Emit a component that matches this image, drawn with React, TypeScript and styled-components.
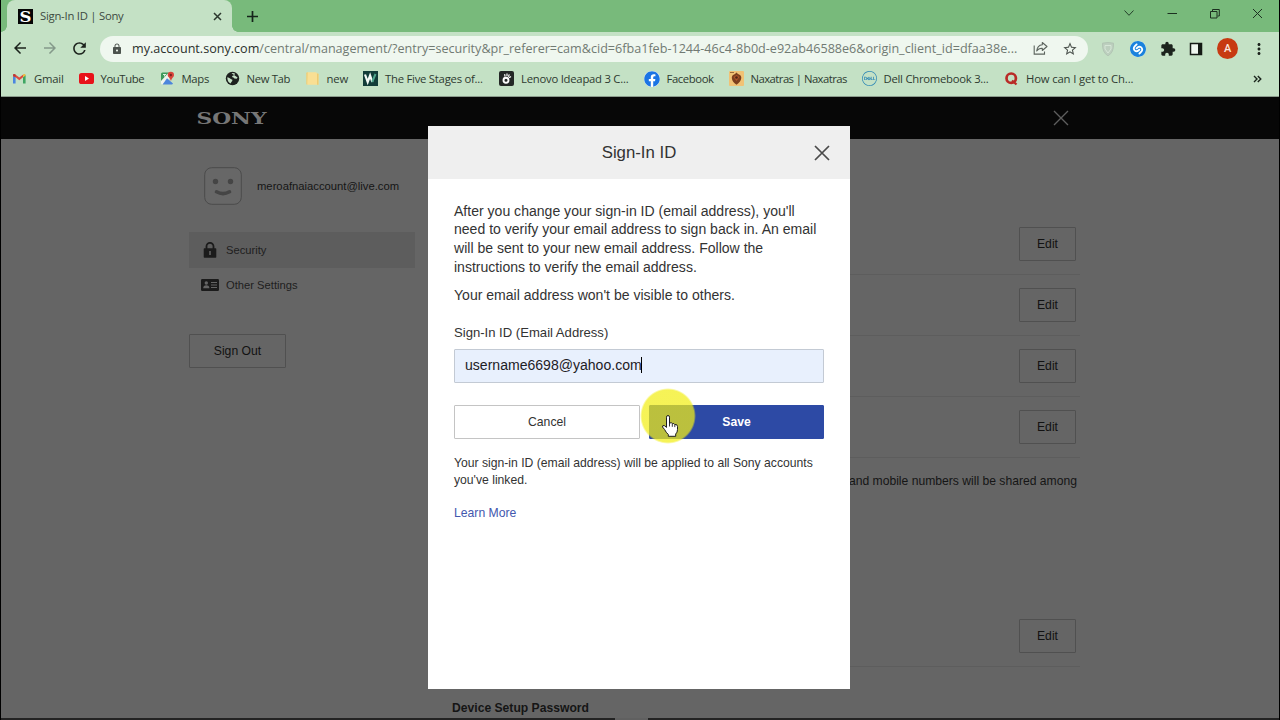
import React from "react";
import styled, { createGlobalStyle } from "styled-components";
import {
  MdArrowBack,
  MdArrowForward,
  MdRefresh,
  MdLock,
  MdStarBorder,
  MdExtension,
  MdMoreVert,
} from "react-icons/md";
import { SiShazam, SiDell } from "react-icons/si";
import { FaFacebook } from "react-icons/fa";

const GlobalStyle = createGlobalStyle`
  * { box-sizing: border-box; }
  body { margin: 0; background: #000; }
  button, input { font: inherit; margin: 0; }
`;

const uiFont = `"Open Sans", "Noto Sans", sans-serif`;
const pageFont = `"Liberation Sans", Arial, sans-serif`;

const Screen = styled.div`
  position: relative;
  width: 1280px;
  height: 720px;
  overflow: hidden;
  display: flex;
  flex-direction: column;
  padding: 0 1px;
  background: #000;
`;

/* ---------- browser chrome ---------- */

const TabStrip = styled.div`
  height: 32px;
  flex: none;
  display: flex;
  align-items: center;
  background: #78ba7b;
`;

const Tab = styled.div`
  position: relative;
  width: 225px;
  height: 32px;
  margin-left: 5.5px;
  padding: 0 10px 0 11px;
  display: flex;
  align-items: center;
  border-radius: 8px 8px 0 0;
  background: #c4e1c5;
  &::before,
  &::after {
    content: "";
    position: absolute;
    bottom: 0;
    width: 6px;
    height: 6px;
  }
  &::before {
    left: -6px;
    background: radial-gradient(circle at 0 0, transparent 5.5px, #c4e1c5 6px);
  }
  &::after {
    right: -6px;
    background: radial-gradient(circle at 100% 0, transparent 5.5px, #c4e1c5 6px);
  }
`;

const Favicon = styled.span`
  width: 15px;
  height: 15px;
  background: #050505;
  display: flex;
`;

const TabTitle = styled.span`
  flex: 1;
  margin-left: 7.5px;
  font: 11.3px/16px ${uiFont};
  letter-spacing: -0.25px;
  color: #3c4a3f;
  white-space: nowrap;
`;

const NewTab = styled.span`
  display: flex;
  margin-left: 14px;
`;

const WindowControls = styled.div`
  margin-left: auto;
  display: flex;
  align-items: center;
  height: 26px;
  align-self: flex-start;
  gap: 31px;
  padding-right: 16.5px;
  svg { display: block; }
`;

const Toolbar = styled.div`
  height: 33px;
  flex: none;
  display: flex;
  align-items: center;
  padding-left: 10px;
  background: #c4e1c5;
  color: #1c231d;
`;

const NavButtons = styled.div`
  display: flex;
  width: 89px;
  gap: 11.5px;
  svg { display: block; }
  svg:nth-child(2) { color: #84998a; }
`;

const Omnibox = styled.div`
  width: 988px;
  height: 26px;
  border-radius: 13px;
  background: #eff7ef;
  display: flex;
  align-items: center;
  padding: 0 9px 0 11px;
  color: #4c534e;
`;

const Url = styled.span`
  width: 901px;
  margin-left: 9px;
  font: 12.6px/20px ${uiFont};
  letter-spacing: 0;
  color: #717a73;
  white-space: nowrap;
  b { font-weight: 400; color: #2b302c; }
`;

const OmniActions = styled.div`
  display: flex;
  align-items: center;
  gap: 14px;
`;

const Extensions = styled.div`
  display: flex;
  align-items: center;
  flex: 1;
  padding: 0 11px 0 12px;
  justify-content: space-between;
  svg { display: block; }
`;

const Avatar = styled.span`
  width: 21px;
  height: 21px;
  margin: 0 -2px 0 0;
  border-radius: 50%;
  background: #c73a12;
  color: #fbe6df;
  font: 11px/21px Roboto, sans-serif;
  font-weight: 500;
  text-align: center;
`;

const Disc = styled.span`
  width: 16px;
  height: 16px;
  border-radius: 50%;
  background: #fff;
  display: flex;
  color: #1a82dd;
`;

const BookmarkBar = styled.div`
  height: 32px;
  flex: none;
  display: flex;
  align-items: center;
  padding: 0 0 4px 11px;
  background: #c4e1c5;
  border-bottom: 1px solid #8b9b8c;
`;

const BookmarkItem = styled.div<{ $width: number }>`
  width: ${(p) => p.$width}px;
  display: flex;
  align-items: center;
  gap: 7px;
  svg { flex: none; display: block; }
`;

const BookmarkLabel = styled.span<{ $spacing: number }>`
  font: 11.3px/16px ${uiFont};
  letter-spacing: ${(p) => p.$spacing}px;
  color: #2e3a30;
  white-space: nowrap;
`;

const More = styled.span`
  display: flex;
  margin-left: auto;
  padding-right: 17px;
`;

/* ---------- account page ---------- */

const SiteHeader = styled.header`
  height: 42px;
  flex: none;
  display: flex;
  align-items: center;
  justify-content: space-between;
  padding: 0 210px 0 192px;
  background: #070707;
`;

const SiteBody = styled.main`
  flex: 1;
  min-height: 0;
  display: flex;
  background: #656565;
  padding-left: 188px;
  font-family: ${pageFont};
  color: #151515;
`;

const Sidebar = styled.aside`
  width: 226px;
  display: flex;
  flex-direction: column;
  align-items: flex-start;
`;

const Account = styled.div`
  display: flex;
  align-items: center;
  gap: 15px;
  height: 38px;
  margin: 28px 0 27px 15px;
  font-size: 11.25px;
`;

const NavItem = styled.div<{ $active?: boolean }>`
  width: 226px;
  height: 35.5px;
  display: flex;
  align-items: center;
  gap: 7px;
  padding-left: 12px;
  font-size: 11.2px;
  color: #202020;
  background: ${(p) => (p.$active ? "#5d5d5d" : "transparent")};
  svg { display: block; }
`;

const OutlineButton = styled.button<{ $width: number }>`
  width: ${(p) => p.$width}px;
  height: 34px;
  padding: 0;
  border: 1px solid #505050;
  border-radius: 1px;
  background: transparent;
  color: #121212;
  font-size: 12.2px;
`;

const SignOut = styled(OutlineButton)`
  margin-top: 31px;
`;

const Content = styled.section`
  width: 628px;
  margin-left: 37px;
  padding-top: 75px;
  flex: none;
`;

const SettingRow = styled.div`
  height: 61px;
  padding-right: 4px;
  display: flex;
  align-items: center;
  justify-content: flex-end;
  border-bottom: 1px solid #5d5d5d;
`;

const SharedNote = styled.p`
  height: 148px;
  margin: 0;
  padding: 15px 3px 0 0;
  font-size: 12.15px;
  line-height: 17px;
  text-align: right;
`;

const SectionTitle = styled.h2`
  margin: 34px 0 0;
  font-size: 12.15px;
  line-height: 15px;
`;

const BottomEdge = styled.div`
  height: 2px;
  flex: none;
  background: linear-gradient(90deg, #232323 614px, #606060 614px, #606060 647px, #232323 647px);
`;

/* ---------- dialog ---------- */

const Dialog = styled.div`
  position: absolute;
  left: 428px;
  top: 126px;
  width: 422px;
  height: 563px;
  background: #fff;
  font-family: ${pageFont};
  color: #333;
`;

const DialogHeader = styled.div`
  display: grid;
  grid-template-columns: 56px 1fr 56px;
  align-items: center;
  justify-items: center;
  height: 53px;
  background: #efefef;
  font-size: 16.8px;
  svg { display: block; }
`;

const DialogBody = styled.div`
  padding: 22.5px 26px 0 26px;
`;

const Paragraph = styled.p`
  margin: 0 0 9.5px;
  font-size: 14.05px;
  line-height: 18.75px;
  white-space: nowrap;
`;

const FieldLabel = styled.label`
  display: block;
  margin-top: 20px;
  font-size: 13.1px;
  line-height: 16px;
`;

const Field = styled.div`
  height: 34px;
  margin-top: 8px;
  padding: 0 0 1px 10px;
  display: flex;
  align-items: center;
  border: 1px solid #c3cad4;
  border-radius: 1px;
  background: #e8f0fd;
  color: #1d2025;
  font-size: 14.05px;
`;

const Caret = styled.span`
  width: 1px;
  height: 16px;
  margin-left: -1px;
  background: #000;
`;

const Actions = styled.div`
  display: flex;
  gap: 9px;
  margin-top: 22px;
`;

const ActionButton = styled.button<{ $primary?: boolean }>`
  flex: ${(p) => (p.$primary ? "1" : "0 0 186px")};
  height: 34px;
  padding: 0;
  border: 1px solid ${(p) => (p.$primary ? "#2d4aa5" : "#c4c4c4")};
  border-radius: 1px;
  background: ${(p) => (p.$primary ? "#2d4aa5" : "#fff")};
  color: ${(p) => (p.$primary ? "#fff" : "#333")};
  font-size: 12.2px;
  font-weight: ${(p) => (p.$primary ? 700 : 400)};
`;

const Note = styled.p`
  margin: 16.5px 0 0;
  font-size: 12.18px;
  line-height: 17px;
  white-space: nowrap;
`;

const LearnMore = styled.a`
  display: block;
  margin-top: 16px;
  font-size: 12.2px;
  line-height: 17px;
  color: #4358ae;
`;

const ClickHalo = styled.div`
  position: absolute;
  left: 640px;
  top: 388px;
  width: 56px;
  height: 56px;
  border-radius: 50%;
  background: radial-gradient(circle, rgba(242, 238, 22, 0.72) 26px, rgba(242, 238, 22, 0) 28px);
`;

const Pointer = styled.svg`
  position: absolute;
  left: 661px;
  top: 414px;
`;

/* ---------- drawings ---------- */

const Cross = ({ size, color, width }: { size: number; color: string; width: number }) => (
  <svg width={size} height={size} viewBox={`0 0 ${size} ${size}`}>
    <path
      d={`M1 1L${size - 1} ${size - 1}M${size - 1} 1L1 ${size - 1}`}
      stroke={color}
      strokeWidth={width}
      fill="none"
    />
  </svg>
);

const GmailIcon = () => (
  <svg width="15" height="15" viewBox="0 0 15 15">
    <path d="M1 4v8.5h2.6V6z" fill="#4b86e0" />
    <path d="M13.6 4v8.5H11V6z" fill="#3fa663" />
    <path d="M1 4.4Q1 2.2 3 3.2L7.3 6.6 11.6 3.2 11 6.2 7.3 9.2 3.6 6.2 1 5.5z" fill="#dd4b40" />
    <path d="M11 3.7l.7-.5q1.9-.9 1.9 1.2L11 6.3z" fill="#eebb3c" />
    <path d="M1 4.4q.1-1.9 1.9-1.2l.7.5v2.6z" fill="#b93a36" />
  </svg>
);

const YouTubeIcon = () => (
  <svg width="15" height="15" viewBox="0 0 15 15">
    <rect x="0" y="2" width="15" height="11" rx="2.6" fill="#e8121a" />
    <path d="M6 5l4 2.5L6 10z" fill="#fff" />
  </svg>
);

const MapsIcon = () => (
  <svg width="15" height="15" viewBox="0 0 15 15">
    <path d="M1 3q0-1.5 1.5-1.5H9L1 10.5z" fill="#3e9a5c" />
    <path d="M1 10L8 2.600l2 4.400L2.500 13.500Q1 13.500 1 12z" fill="#f0f4ee" />
    <path d="M7 7.200l6 5.400q-.4.900-1.400.900H2.600z" fill="#4c86dc" />
    <path d="M10.800.8A3.200 3.200 0 0 1 14 4c0 2.200-2.200 2.800-3 6-.8-3.200-3.300-3.800-3.300-6A3.200 3.200 0 0 1 10.800.8z" fill="#d9453c" />
    <circle cx="10.800" cy="4" r="1.200" fill="#7c2420" />
    <path d="M3 3.500h3.200M4.600 3.500v2" stroke="#dff0e2" strokeWidth="1" />
  </svg>
);

const GlobeIcon = () => (
  <svg width="15" height="15" viewBox="0 0 15 15">
    <circle cx="7.500" cy="7.500" r="6.700" fill="#1d211e" />
    <path d="M2.300 6.200q1.800.2 2.800 1.200 1 1 2.300 1.300.2 1.400-1 2.200l-.8 1.500Q2.200 11 2.300 6.200zM6.500 2.200q2.200-.5 3.600.6l-1 1.500-1.500.4-.6 1.400q1.800.2 2.400 1.400l2.300.2.900-1.200" fill="#c4e1c5" />
  </svg>
);

const FolderIcon = () => (
  <svg width="15" height="15" viewBox="0 0 15 15">
    <path d="M2.500 1.200h9v1.300h1.200q.8 0 .8.800v10.500h-11q-1 0-1-1V2.200q0-1 1-1z" fill="#f9df94" />
    <path d="M12 2.500h.700q.8 0 .8.800v10.500H12z" fill="#edcb72" />
    <path d="M2.500 1.200h-.3q-.700.200-.7 1v10.600q0 .800.700 1z" fill="#e9c56a" />
  </svg>
);

const WIcon = () => (
  <svg width="15" height="15" viewBox="0 0 15 15">
    <rect width="15" height="15" fill="#123c38" />
    <path d="M2 3.500l2.700 7.500 2.400-6.500 2.200 6.500" stroke="#f4faf6" strokeWidth="2.200" fill="none" />
    <path d="M9.200 11l3.300-8" stroke="#4fa58c" strokeWidth="2" />
  </svg>
);

const HandIcon = () => (
  <svg width="15" height="15" viewBox="0 0 15 15">
    <rect width="15" height="15" rx="2" fill="#242826" />
    <circle cx="7" cy="9.300" r="2.500" stroke="#fff" strokeWidth="1.900" fill="none" />
    <path d="M5.600 3.200l.5 2.400M8 2.600v2.700M10.300 3.400L9.400 5.700M12 5.500l-1.900 1.300" stroke="#fff" strokeWidth="1.200" />
  </svg>
);

const AcornIcon = () => (
  <svg width="15" height="15" viewBox="0 0 15 15">
    <rect width="15" height="15" rx="1" fill="#f1c275" />
    <path d="M1 1.500h4" stroke="#9c6b3a" strokeWidth="1" />
    <path d="M7.500 1.500l1.500 1.500q3.500 1 3.300 4-.6 4-4.800 6.800Q3.200 11 2.800 7q-.2-3 3.200-4z" fill="#7c3f1d" />
    <path d="M4.500 6l3-2 3 2-3 4z" fill="#b0552a" />
    <circle cx="7.500" cy="6.500" r="1.300" fill="#4e2715" />
  </svg>
);

const QIcon = () => (
  <svg width="15" height="15" viewBox="0 0 15 15">
    <circle cx="7.200" cy="7.200" r="4.700" stroke="#b92b27" strokeWidth="2.700" fill="none" />
    <path d="M8 9.500l4.500 4" stroke="#b92b27" strokeWidth="2.300" />
  </svg>
);

const ShareIcon = () => (
  <svg width="15" height="15" viewBox="0 0 15 15" fill="none" stroke="#5c645e" strokeWidth="1.100">
    <path d="M1.200 4.500v8.600h10.300v-2.600" />
    <path d="M9.300 1.500l4.700 4-4.700 4V7.200Q5.500 7 3.700 10 4.300 4.300 9.300 3.800z" strokeLinejoin="round" />
  </svg>
);

const bookmarks: { label: string; icon: React.ReactNode; width: number; spacing: number }[] = [
  { label: "Gmail", icon: <GmailIcon />, width: 66.5, spacing: -0.2 },
  { label: "YouTube", icon: <YouTubeIcon />, width: 81, spacing: -0.4 },
  { label: "Maps", icon: <MapsIcon />, width: 65, spacing: -0.3 },
  { label: "New Tab", icon: <GlobeIcon />, width: 80, spacing: -0.35 },
  { label: "new", icon: <FolderIcon />, width: 58.5, spacing: -0.1 },
  { label: "The Five Stages of...", icon: <WIcon />, width: 136, spacing: -0.24 },
  { label: "Lenovo Ideapad 3 C...", icon: <HandIcon />, width: 144.5, spacing: -0.24 },
  {
    label: "Facebook",
    icon: (
      <Disc>
        <FaFacebook size={16} color="#1b74e4" />
      </Disc>
    ),
    width: 85,
    spacing: -0.4,
  },
  { label: "Naxatras | Naxatras", icon: <AcornIcon />, width: 133, spacing: -0.54 },
  { label: "Dell Chromebook 3...", icon: <SiDell size={15} color="#2b86b5" />, width: 142.5, spacing: -0.26 },
  { label: "How can I get to Ch...", icon: <QIcon />, width: 140, spacing: -0.15 },
];

export default function App() {
  return (
    <Screen>
      <GlobalStyle />
      <TabStrip>
        <Tab>
          <Favicon>
            <svg width="15" height="15" viewBox="0 0 15 15">
              <text x="1.500" y="12.600" fontFamily="DejaVu Serif" fontWeight="700" fontSize="14" fill="#fff" textLength="12" lengthAdjust="spacingAndGlyphs">S</text>
            </svg>
          </Favicon>
          <TabTitle>Sign-In ID | Sony</TabTitle>
          <Cross size={9} color="#2c382e" width={1.5} />
        </Tab>
        <NewTab>
          <svg width="13" height="13" viewBox="0 0 13 13">
            <path d="M6.500 1v11M1 6.500h11" stroke="#15241a" strokeWidth="1.700" />
          </svg>
        </NewTab>
        <WindowControls>
          <svg width="12" height="12" viewBox="0 0 12 12">
            <path d="M1.500 3.500L6 8.300l4.500-4.800" stroke="#24402a" fill="none" />
          </svg>
          <svg width="12" height="12" viewBox="0 0 12 12">
            <path d="M1.500 6.500h9.500" stroke="#1c3020" />
          </svg>
          <svg width="12" height="12" viewBox="0 0 12 12" fill="none" stroke="#1c3020">
            <path d="M1.500 4.500h6.500v6.500H1.500zM3.500 4V2.500H10.300V9H8.500" />
          </svg>
          <Cross size={11} color="#1c3020" width={1} />
        </WindowControls>
      </TabStrip>

      <Toolbar>
        <NavButtons>
          <MdArrowBack size={18} />
          <MdArrowForward size={18} />
          <MdRefresh size={19} />
        </NavButtons>
        <Omnibox>
          <MdLock size={12} />
          <Url>
            <b>my.account.sony.com</b>
            /central/management/?entry=security&amp;pr_referer=cam&amp;cid=6fba1feb-1244-46c4-8b0d-e92ab46588e6&amp;origin_client_id=dfaa38e...
          </Url>
          <OmniActions>
            <ShareIcon />
            <MdStarBorder size={16} />
          </OmniActions>
        </Omnibox>
        <Extensions>
          <svg width="16" height="16" viewBox="0 0 16 16">
            <path d="M2.500 2.200Q8 .8 13.500 2.200 14 11.500 8 14.800 2 11.500 2.500 2.200z" fill="#bccfbe" stroke="#b2c5b4" />
            <path d="M5 4.500h6v3.500L8 12 5 8z" fill="none" stroke="#d6e6d7" />
          </svg>
          <Disc>
            <SiShazam size={16} />
          </Disc>
          <MdExtension size={16} />
          <svg width="14" height="14" viewBox="0 0 14 14">
            <path d="M1.500 1.500h11v11h-11z" fill="#eff7ef" stroke="#141a15" strokeWidth="1.500" />
            <path d="M9 1.500h3.500v11H9z" fill="#141a15" />
          </svg>
          <Avatar>A</Avatar>
          <MdMoreVert size={18} />
        </Extensions>
      </Toolbar>

      <BookmarkBar>
        {bookmarks.map((b) => (
          <BookmarkItem key={b.label} $width={b.width}>
            {b.icon}
            <BookmarkLabel $spacing={b.spacing}>{b.label}</BookmarkLabel>
          </BookmarkItem>
        ))}
        <More>
          <svg width="9" height="8" viewBox="0 0 9 8">
            <path d="M1 1l3 3-3 3M4.800 1l3 3-3 3" stroke="#1a241c" strokeWidth="1.400" fill="none" />
          </svg>
        </More>
      </BookmarkBar>

      <SiteHeader>
        <svg width="80" height="28" viewBox="0 0 80 28">
          <text x="3.500" y="19.500" fontFamily="DejaVu Serif" fontWeight="700" fontSize="16" fill="#767676" textLength="70" lengthAdjust="spacingAndGlyphs">SONY</text>
        </svg>
        <Cross size={16} color="#5e5e5e" width={1.4} />
      </SiteHeader>

      <SiteBody>
        <Sidebar>
          <Account>
            <svg width="38" height="38" viewBox="0 0 38 38">
              <rect x="0.700" y="0.700" width="36.600" height="36.600" rx="7" fill="#676767" stroke="#4b4b4b" strokeWidth="1" />
              <circle cx="11.500" cy="14.500" r="2.700" fill="#454545" />
              <circle cx="26.500" cy="14.500" r="2.700" fill="#454545" />
              <path d="M12.500 24.800q6.500 3.600 13 0" stroke="#454545" strokeWidth="3.600" strokeLinecap="round" fill="none" />
            </svg>
            meroafnaiaccount@live.com
          </Account>
          <NavItem $active>
            <svg width="18" height="16" viewBox="0 0 18 16">
              <path d="M5.500 7V4.300a3.500 3.500 0 0 1 7 0V7" stroke="#1b1b1b" strokeWidth="1.800" fill="none" />
              <rect x="2.700" y="6.300" width="12.600" height="9.400" rx="0.800" fill="#1b1b1b" />
              <path d="M9 9v4" stroke="#656565" strokeWidth="1.500" />
            </svg>
            Security
          </NavItem>
          <NavItem>
            <svg width="18" height="12" viewBox="0 0 18 12">
              <rect width="18" height="12" rx="1.200" fill="#1b1b1b" />
              <circle cx="5.300" cy="4" r="1.700" fill="#656565" />
              <path d="M2.200 9.300q0-3 3.100-3t3.100 3z" fill="#656565" />
              <path d="M10 3.500h6M10 6h6M10 8.500h6" stroke="#656565" strokeWidth="1.100" />
            </svg>
            Other Settings
          </NavItem>
          <SignOut $width={97}>Sign Out</SignOut>
        </Sidebar>
        <Content>
          {[0, 1, 2, 3].map((row) => (
            <SettingRow key={row}>
              <OutlineButton $width={57}>Edit</OutlineButton>
            </SettingRow>
          ))}
          <SharedNote>and mobile numbers will be shared among</SharedNote>
          <SettingRow>
            <OutlineButton $width={57}>Edit</OutlineButton>
          </SettingRow>
          <SectionTitle>Device Setup Password</SectionTitle>
        </Content>
      </SiteBody>
      <BottomEdge />

      <Dialog role="dialog">
        <DialogHeader>
          <span />
          <span>Sign-In ID</span>
          <Cross size={16} color="#4a4a4a" width={1.7} />
        </DialogHeader>
        <DialogBody>
          <Paragraph>
            After you change your sign-in ID (email address), you'll
            <br />
            need to verify your email address to sign back in. An email
            <br />
            will be sent to your new email address. Follow the
            <br />
            instructions to verify the email address.
          </Paragraph>
          <Paragraph>Your email address won't be visible to others.</Paragraph>
          <FieldLabel>Sign-In ID (Email Address)</FieldLabel>
          <Field>
            username6698@yahoo.com
            <Caret />
          </Field>
          <Actions>
            <ActionButton>Cancel</ActionButton>
            <ActionButton $primary>Save</ActionButton>
          </Actions>
          <Note>
            Your sign-in ID (email address) will be applied to all Sony accounts
            <br />
            you've linked.
          </Note>
          <LearnMore>Learn More</LearnMore>
        </DialogBody>
      </Dialog>

      <ClickHalo />
      <Pointer width="18" height="24" viewBox="0 0 18 24">
        <path
          d="M5.500 3.200Q5.500 1.500 7 1.500T8.500 3.200V9Q10.800 8.200 11.300 9.600 13.200 9 13.700 10.500 16.500 10 16.500 12.500V15.500Q16.500 18.500 14.700 20V22.300H7.300V20.500Q5 18.500 3.600 15.500L1.500 13Q1.300 11.200 3.200 11.500L5.500 13.400z"
          fill="#fff"
          stroke="#1d1d1d"
          strokeWidth="1"
          strokeLinejoin="round"
        />
        <path d="M8.500 9v3.500M11.300 9.800v3M13.800 10.700v2.400" stroke="#1d1d1d" strokeWidth="0.900" />
      </Pointer>
    </Screen>
  );
}
